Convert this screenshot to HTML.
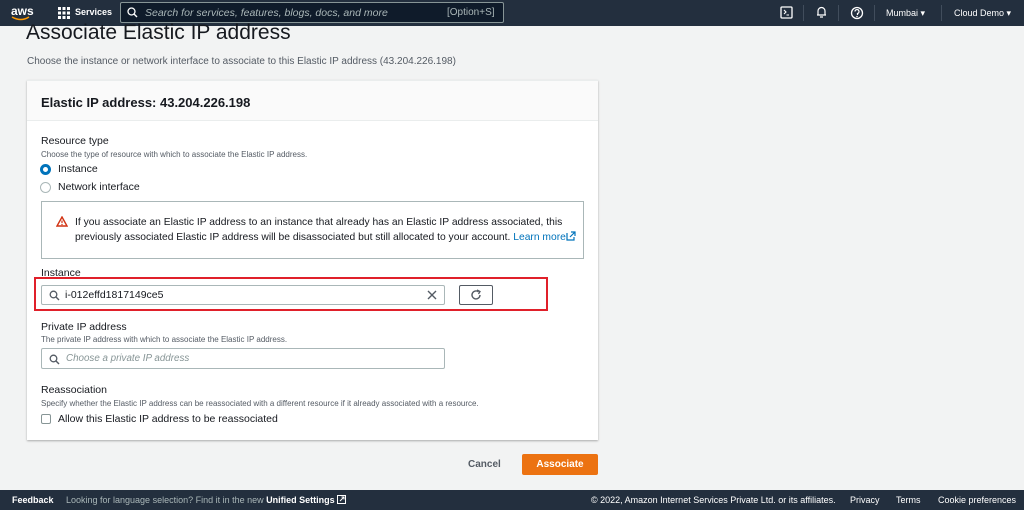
<!DOCTYPE html>
<html><head><meta charset="utf-8"><style>
*{margin:0;padding:0;box-sizing:border-box}
body{width:1024px;height:510px;background:#f2f3f3;font-family:"Liberation Sans",sans-serif;color:#16191f;position:relative;overflow:hidden}
.a{position:absolute;white-space:nowrap}
.top{position:absolute;left:0;top:0;width:1024px;height:26px;background:#232f3e}
.foot{position:absolute;left:0;top:490px;width:1024px;height:20px;background:#232f3e;color:#fff;font-size:9px}
.card{position:absolute;left:27px;top:80px;width:571px;height:360px;background:#fff;box-shadow:0 1px 2px rgba(0,0,0,.3);border-top:1px solid #eaeded}
.hdr{position:absolute;left:0;top:0;width:571px;height:40px;background:#fafafa;border-bottom:1px solid #eaeded}
.lbl{font-size:10.5px;color:#16191f}
.desc{font-size:8px;color:#545b64}
.inp{position:absolute;border:1px solid #aab7b8;border-radius:2px;background:#fff}
</style></head><body>
<div class="top">
  <div class="a" style="left:11px;top:4px;color:#fff;font-size:12px;font-weight:bold">aws</div>
  <svg class="a" style="left:11px;top:16px" width="20" height="6"><path d="M1 1 Q10 6 18 1" stroke="#ff9900" stroke-width="1.5" fill="none"/></svg>
  <svg class="a" style="left:58px;top:7px" width="12" height="12" fill="#fff"><rect x="0" y="0" width="3" height="3"/><rect x="4.5" y="0" width="3" height="3"/><rect x="9" y="0" width="3" height="3"/><rect x="0" y="4.5" width="3" height="3"/><rect x="4.5" y="4.5" width="3" height="3"/><rect x="9" y="4.5" width="3" height="3"/><rect x="0" y="9" width="3" height="3"/><rect x="4.5" y="9" width="3" height="3"/><rect x="9" y="9" width="3" height="3"/></svg>
  <div class="a" style="left:75px;top:7px;color:#fff;font-size:9px;font-weight:bold">Services</div>
  <div class="a" style="left:120px;top:2px;width:384px;height:21px;border:1px solid #879596;border-radius:2px;background:#0f1b2a"></div>
  <svg class="a" style="left:127px;top:7px" width="11" height="11"><circle cx="4.5" cy="4.5" r="3.5" stroke="#fff" stroke-width="1.3" fill="none"/><path d="M7 7 L10 10" stroke="#fff" stroke-width="1.4"/></svg>
  <div class="a" style="left:145px;top:7px;color:#aab7b8;font-size:10.5px;font-style:italic">Search for services, features, blogs, docs, and more</div>
  <div class="a" style="left:447px;top:7px;color:#aab7b8;font-size:10px">[Option+S]</div>
  <svg class="a" style="left:780px;top:6px" width="13" height="13"><rect x="1" y="1" width="11" height="11" rx="1" stroke="#fff" fill="none" stroke-width="1.3"/><path d="M4 4 L6 6 L4 8 M6.5 9 H9" stroke="#fff" fill="none" stroke-width="1.1"/></svg>
  <div class="a" style="left:803px;top:5px;width:1px;height:16px;background:#414d5c"></div>
  <svg class="a" style="left:815px;top:5px" width="13" height="14"><path d="M3 10 V6 a3.5 3.5 0 0 1 7 0 V10 H2 H11 M5 12 H8" stroke="#fff" fill="none" stroke-width="1.2"/></svg>
  <div class="a" style="left:838px;top:5px;width:1px;height:16px;background:#414d5c"></div>
  <svg class="a" style="left:850px;top:6px" width="14" height="14"><circle cx="7" cy="7" r="5.5" stroke="#fff" fill="none" stroke-width="1.3"/><path d="M5 5.5 a2 2 0 1 1 2.5 2 V9" stroke="#fff" fill="none" stroke-width="1.2"/><circle cx="7" cy="10.5" r=".8" fill="#fff"/></svg>
  <div class="a" style="left:874px;top:5px;width:1px;height:16px;background:#414d5c"></div>
  <div class="a" style="left:886px;top:8px;color:#fff;font-size:9px">Mumbai ▾</div>
  <div class="a" style="left:941px;top:5px;width:1px;height:16px;background:#414d5c"></div>
  <div class="a" style="left:954px;top:8px;color:#fff;font-size:9px">Cloud Demo ▾</div>
</div>

<div class="a" style="left:26px;top:21px;font-size:21px;color:#16191f">Associate Elastic IP address</div>
<div class="a" style="left:27px;top:56px;font-size:10px;color:#545b64">Choose the instance or network interface to associate to this Elastic IP address (43.204.226.198)</div>

<div class="card">
  <div class="hdr"></div>
  <div class="a" style="left:14px;top:14px;font-size:13px;font-weight:bold">Elastic IP address: 43.204.226.198</div>
  <div class="a lbl" style="left:14px;top:54px">Resource type</div>
  <div class="a desc" style="left:14px;top:69px">Choose the type of resource with which to associate the Elastic IP address.</div>
  <div class="a" style="left:13px;top:83px;width:11px;height:11px;border-radius:50%;border:3px solid #0073bb"></div>
  <div class="a lbl" style="left:31px;top:82px">Instance</div>
  <div class="a" style="left:13px;top:101px;width:11px;height:11px;border-radius:50%;border:1px solid #aab7b8"></div>
  <div class="a lbl" style="left:31px;top:100px">Network interface</div>
  <div class="a" style="left:14px;top:120px;width:543px;height:58px;border:1px solid #aab7b8"></div>
  <svg class="a" style="left:29px;top:135px" width="12" height="11"><path d="M6 1 L11 10 H1 Z" stroke="#d13212" stroke-width="1.4" fill="none"/><path d="M6 4.5 V7" stroke="#d13212" stroke-width="1.2"/><circle cx="6" cy="8.5" r=".7" fill="#d13212"/></svg>
  <div class="a" style="left:48px;top:134px;font-size:10.3px;line-height:15px">If you associate an Elastic IP address to an instance that already has an Elastic IP address associated, this<br>previously associated Elastic IP address will be disassociated but still allocated to your account. <span style="color:#0073bb">Learn more</span><svg width="10" height="10" style="vertical-align:-1px"><path d="M1 2 V9 H8 V6 M5 1 H9 V5 M9 1 L4 6" stroke="#0073bb" stroke-width="1.2" fill="none"/></svg></div>
  <div class="a lbl" style="left:14px;top:186px">Instance</div>
  <div class="inp" style="left:14px;top:204px;width:404px;height:20px"></div>
  <svg class="a" style="left:22px;top:209px" width="11" height="11"><circle cx="4.5" cy="4.5" r="3.3" stroke="#545b64" stroke-width="1.3" fill="none"/><path d="M7 7 L10 10" stroke="#545b64" stroke-width="1.4"/></svg>
  <div class="a lbl" style="left:38px;top:208px">i-012effd1817149ce5</div>
  <svg class="a" style="left:400px;top:209px" width="10" height="10"><path d="M1 1 L9 9 M9 1 L1 9" stroke="#545b64" stroke-width="1.4"/></svg>
  <div class="a" style="left:432px;top:204px;width:34px;height:20px;border:1px solid #545b64;border-radius:2px"></div>
  <svg class="a" style="left:443px;top:208px" width="12" height="12"><path d="M10 6 A4 4 0 1 1 8.5 2.8" stroke="#545b64" stroke-width="1.4" fill="none"/><path d="M7 1 L10 2.5 L8.5 5" stroke="#545b64" stroke-width="1.3" fill="none"/></svg>
  <div class="a lbl" style="left:14px;top:240px">Private IP address</div>
  <div class="a desc" style="left:14px;top:254px">The private IP address with which to associate the Elastic IP address.</div>
  <div class="inp" style="left:14px;top:267px;width:404px;height:21px"></div>
  <svg class="a" style="left:22px;top:273px" width="11" height="11"><circle cx="4.5" cy="4.5" r="3.3" stroke="#545b64" stroke-width="1.3" fill="none"/><path d="M7 7 L10 10" stroke="#545b64" stroke-width="1.4"/></svg>
  <div class="a" style="left:39px;top:272px;font-size:9.8px;font-style:italic;color:#879596">Choose a private IP address</div>
  <div class="a lbl" style="left:14px;top:303px">Reassociation</div>
  <div class="a desc" style="left:14px;top:318px">Specify whether the Elastic IP address can be reassociated with a different resource if it already associated with a resource.</div>
  <div class="a" style="left:14px;top:333px;width:10px;height:10px;border:1px solid #879596;border-radius:2px"></div>
  <div class="a lbl" style="left:31px;top:332px">Allow this Elastic IP address to be reassociated</div>
</div>

<div class="a" style="left:34px;top:277px;width:514px;height:34px;border:2px solid #e0202a"></div>

<div class="a" style="left:468px;top:459px;font-size:10px;font-weight:bold;color:#545b64">Cancel</div>
<div class="a" style="left:522px;top:454px;width:76px;height:21px;background:#ec7211;border-radius:2px;color:#fff;font-size:10px;font-weight:bold;text-align:center;line-height:21px">Associate</div>

<div class="foot">
  <div class="a" style="left:12px;top:5px;font-weight:bold">Feedback</div>
  <div class="a" style="left:66px;top:5px;color:#aab7b8">Looking for language selection? Find it in the new <b style="color:#fff">Unified Settings</b> <svg width="9" height="9" style="vertical-align:-1px"><rect x=".5" y=".5" width="8" height="8" stroke="#fff" fill="none"/><path d="M3 6 L7 2 M4.5 2 H7 V4.5" stroke="#fff" fill="none"/></svg></div>
  <div class="a" style="left:591px;top:5px">© 2022, Amazon Internet Services Private Ltd. or its affiliates.</div>
  <div class="a" style="left:850px;top:5px">Privacy</div>
  <div class="a" style="left:896px;top:5px">Terms</div>
  <div class="a" style="left:938px;top:5px">Cookie preferences</div>
</div>
</body></html>
